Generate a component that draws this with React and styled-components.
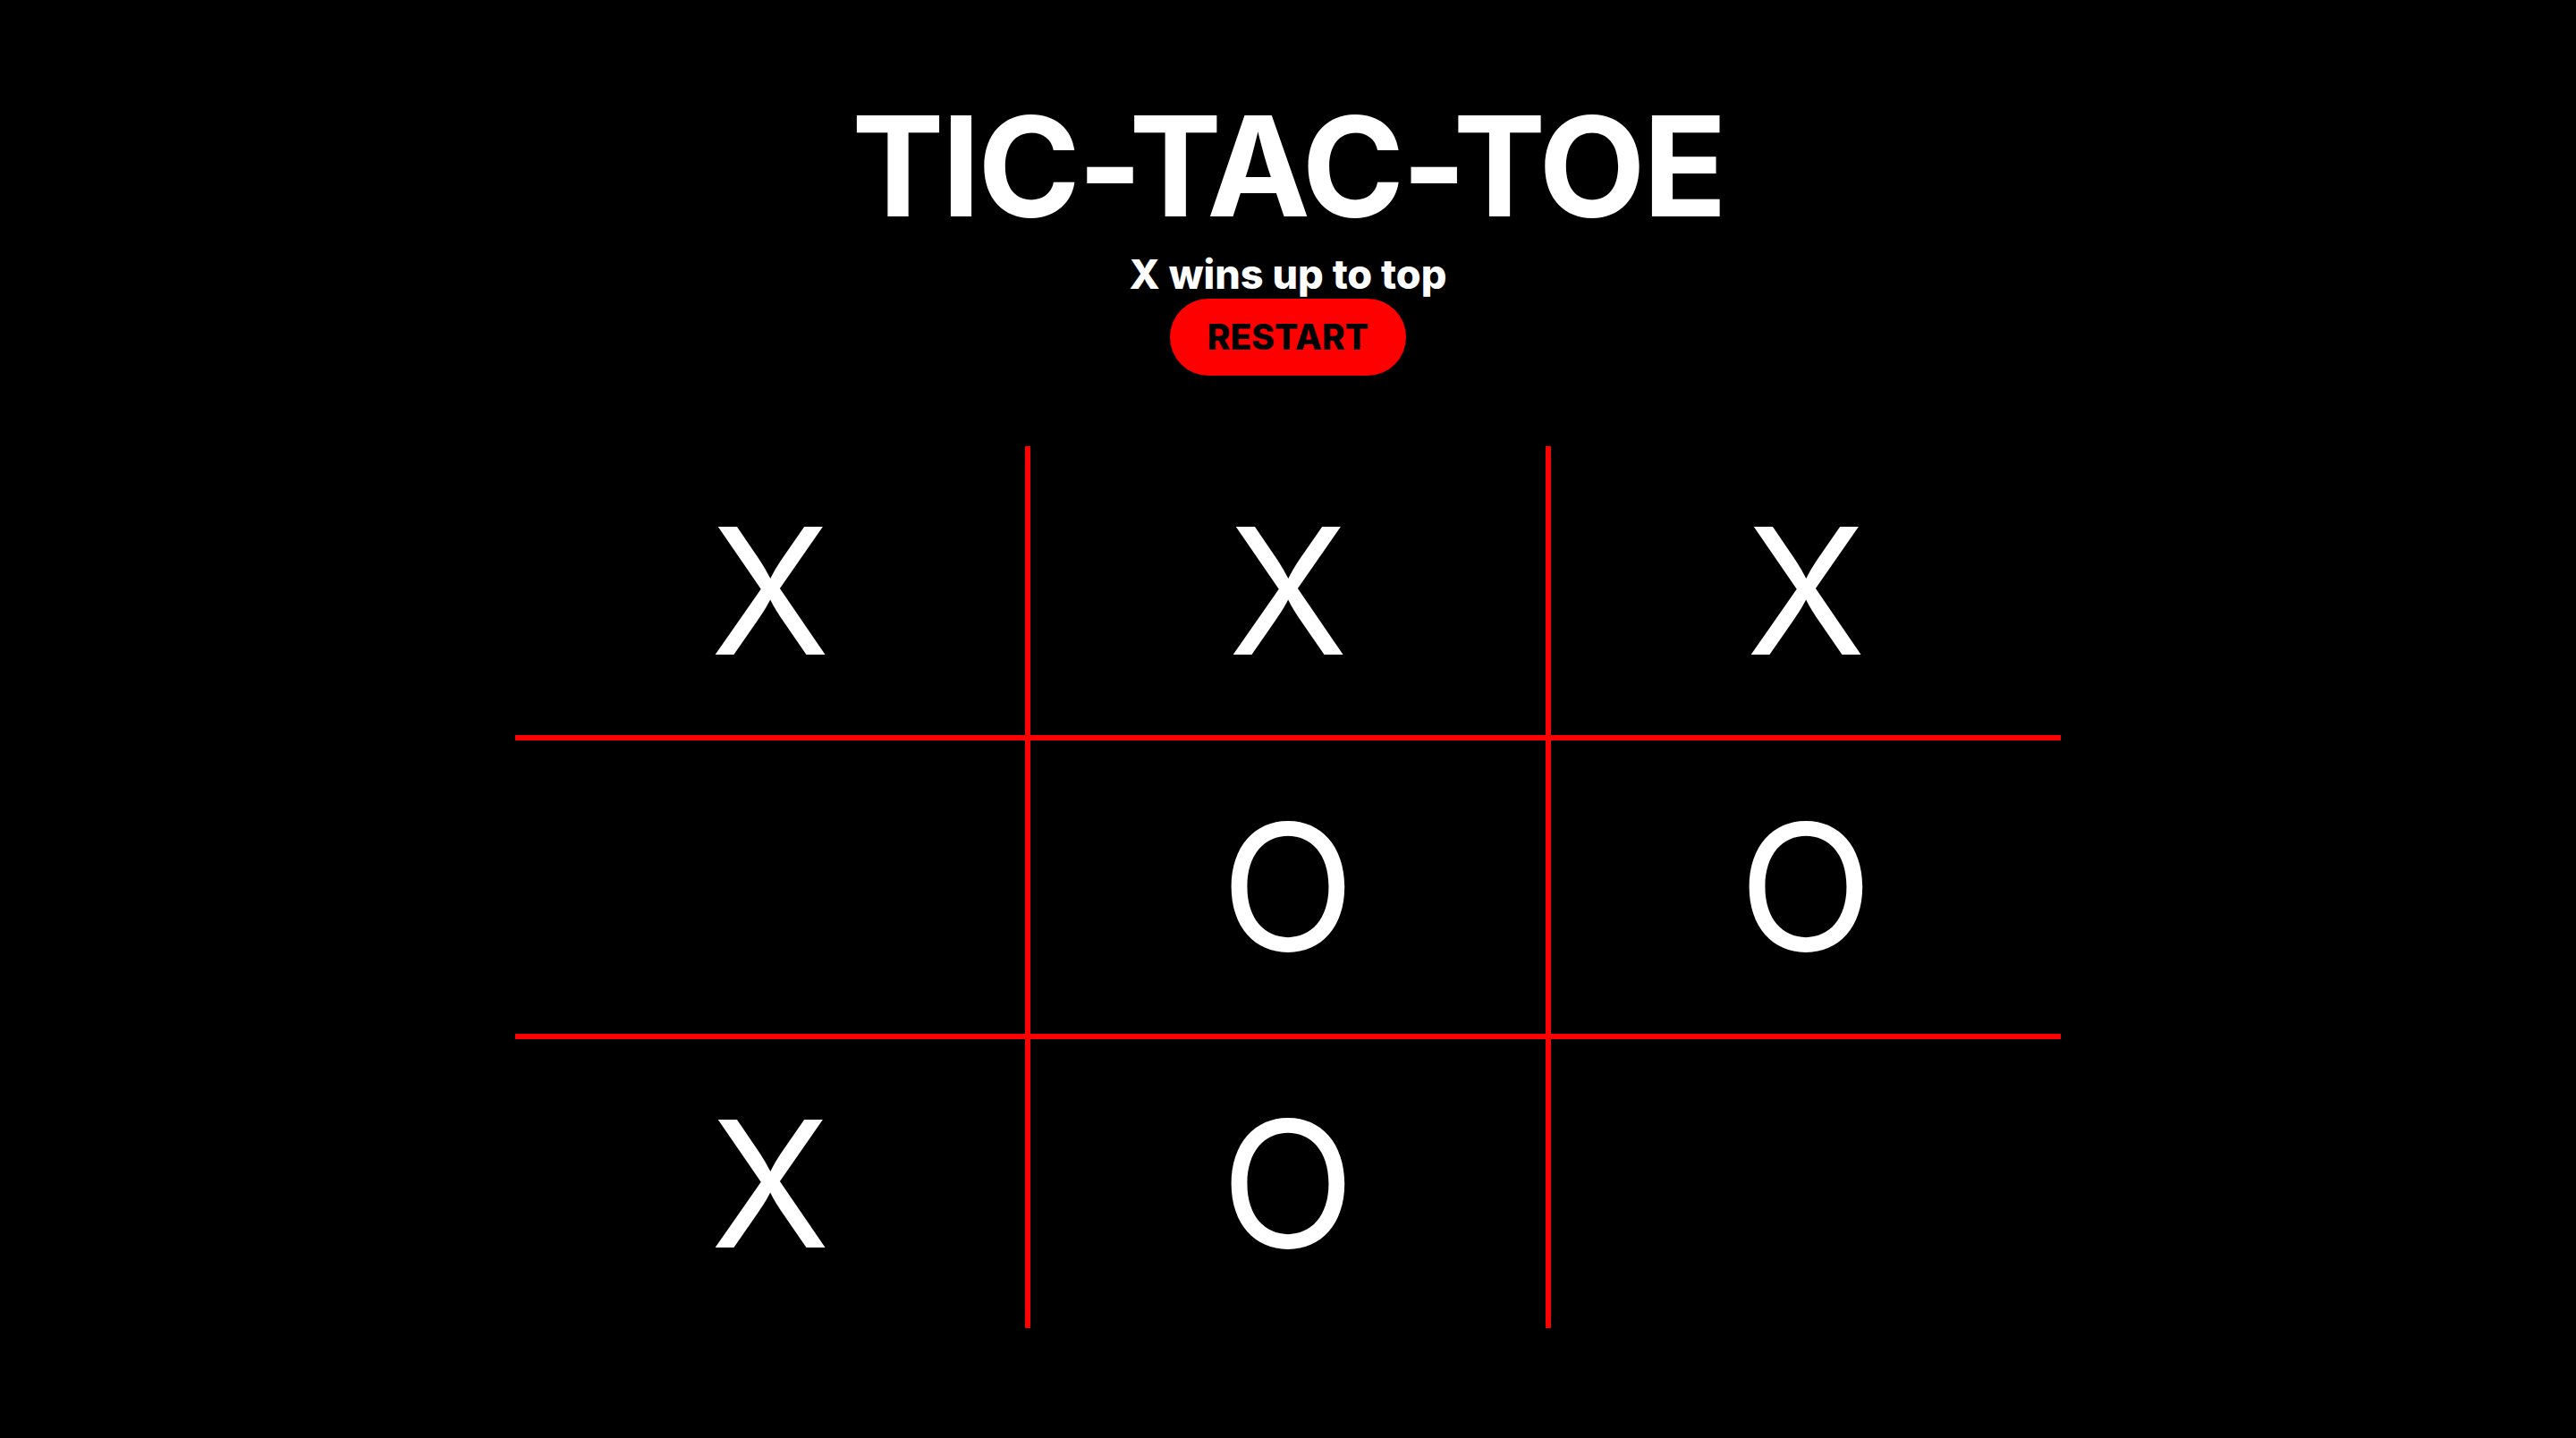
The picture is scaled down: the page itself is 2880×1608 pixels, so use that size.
import React, { useState } from 'react'
import styled, { createGlobalStyle } from 'styled-components'

const GlobalStyle = createGlobalStyle`
  html, body {
    margin: 0;
    padding: 0;
    background: #000;
  }
  body {
    font-family: Inter, "Noto Sans", sans-serif;
    color: #fff;
  }
`

const StyledGame = styled.main`
  min-height: 100vh;
  display: flex;
  flex-direction: column;
  align-items: center;
  padding-top: 92px;
  box-sizing: border-box;
`

const Title = styled.h1`
  margin: 0;
  font-size: 155px;
  font-weight: 700;
  line-height: normal;
  letter-spacing: -3px;
`

const Status = styled.p`
  margin: 0;
  font-size: 45px;
  font-weight: 800;
  line-height: normal;
`

const RestartButton = styled.button`
  margin: 0;
  padding: 19px 42px 20px;
  border: none;
  border-radius: 999px;
  background: #ff0000;
  color: #000;
  font-family: Inter, "Noto Sans", sans-serif;
  font-size: 39px;
  font-weight: 800;
  line-height: normal;
  cursor: pointer;
`

const Board = styled.div`
  width: 60%;
  margin-top: 79px;
  display: grid;
  grid-template-columns: repeat(3, 1fr);
  grid-template-rows: 329px 328px 329px;
`

// outer columns/rows carry the red lines, the middle ones stay bare
const line = '6px solid #ff0000'

const Cell = styled.div`
  display: flex;
  align-items: center;
  justify-content: center;
  box-sizing: border-box;
  border-right: ${(p) => (p.$col === 0 ? line : 'none')};
  border-left: ${(p) => (p.$col === 2 ? line : 'none')};
  border-bottom: ${(p) => (p.$row === 0 ? line : 'none')};
  border-top: ${(p) => (p.$row === 2 ? line : 'none')};
  font-size: 196px;
  font-weight: 400;
  line-height: 1;
  cursor: pointer;
`

const START = ['X', 'X', 'X', '', 'O', 'O', 'X', 'O', '']

const App = () => {
  const [cells, setCells] = useState(START)

  const restart = () => setCells(Array(9).fill(''))

  return (
    <>
      <GlobalStyle />
      <StyledGame>
        <Title>TIC-TAC-TOE</Title>
        <Status>X wins up to top</Status>
        <RestartButton onClick={restart}>RESTART</RestartButton>
        <Board>
          {cells.map((value, i) => (
            <Cell key={i} $row={Math.floor(i / 3)} $col={i % 3}>
              {value}
            </Cell>
          ))}
        </Board>
      </StyledGame>
    </>
  )
}

export default App
